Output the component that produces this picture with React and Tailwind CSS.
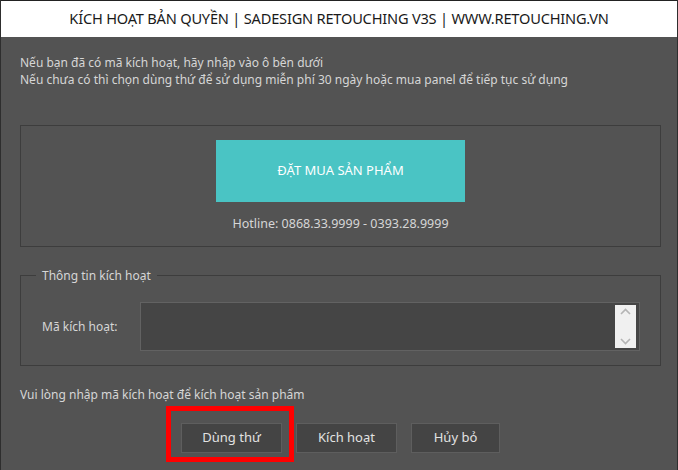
import React from "react";

const font = { fontFamily: '"Noto Sans", "Open Sans", sans-serif' };

const ActionButton = ({ label, width, highlighted }) => (
  <div className="relative">
    <button
      className={`${width} h-[30px] bg-[#444444] border border-[#5e5e5e] text-[13px] text-[#e2e2e2]`}
    >
      {label}
    </button>
    {highlighted && (
      <div className="absolute -left-[15px] -top-[17px] w-[128px] h-[56px] border-[5px] border-[#ff0000] pointer-events-none" />
    )}
  </div>
);

const App = () => {
  return (
    <div
      className="w-[678px] h-[470px] bg-[#535353] border-x border-[#2e2e2e] overflow-hidden"
      style={font}
    >
      {/* Title bar */}
      <div className="h-[37px] bg-white border-t border-[#222] flex items-center justify-center text-[14.6px] text-[#1a1a1a] tracking-[-0.2px]">
        KÍCH HOẠT BẢN QUYỀN | SADESIGN RETOUCHING V3S | WWW.RETOUCHING.VN
      </div>

      <div className="pl-[19px] pr-[16px] pt-[17px]">
        <div className="text-[12px] leading-[17px] text-[#d6d6d6]">
          <p>Nếu bạn đã có mã kích hoạt, hãy nhập vào ô bên dưới</p>
          <p>
            Nếu chưa có thì chọn dùng thứ để sử dụng miễn phí 30 ngày hoặc mua
            panel để tiếp tục sử dụng
          </p>
        </div>

        {/* Purchase box */}
        <div className="mt-[37px] h-[122px] border border-[#3d3d3d] flex flex-col items-center pt-[14px]">
          <button className="w-[249px] h-[62px] bg-[#4ac4c4] text-[13px] text-white">
            ĐẶT MUA SẢN PHẨM
          </button>
          <p className="mt-[13px] text-[12.5px] leading-[17px] text-[#d6d6d6]">
            Hotline: 0868.33.9999 - 0393.28.9999
          </p>
        </div>

        {/* Activation info */}
        <fieldset className="mt-[20px] h-[99px] border border-[#3d3d3d] pr-[20px] pl-[15px]">
          <legend className="px-[6px] text-[12px] leading-[17px] text-[#d6d6d6]">
            Thông tin kích hoạt
          </legend>
          <div className="flex items-center mt-[18px] pl-[6px]">
            <span className="w-[98px] text-[12px] text-[#d6d6d6]">
              Mã kích hoạt:
            </span>
            <div className="flex-1 h-[49px] bg-[#454545] border border-[#626262] flex justify-end pt-[2px] pr-[3px]">
              <div className="w-[21px] h-[43px] bg-[#f0f0f0] flex flex-col items-center justify-between py-[3px]">
                <svg width="11" height="7" viewBox="0 0 11 7">
                  <path d="M1 6 L5.5 1.5 L10 6" fill="none" stroke="#b4b4b4" strokeWidth="1.6" />
                </svg>
                <svg width="11" height="7" viewBox="0 0 11 7">
                  <path d="M1 1 L5.5 5.5 L10 1" fill="none" stroke="#b4b4b4" strokeWidth="1.6" />
                </svg>
              </div>
            </div>
          </div>
        </fieldset>

        <p className="mt-[20px] text-[12px] leading-[17px] text-[#d6d6d6]">
          Vui lòng nhập mã kích hoạt để kích hoạt sản phẩm
        </p>

        <div className="mt-[20px] flex justify-center gap-[14px]">
          <ActionButton label="Dùng thứ" width="w-[101px]" highlighted />
          <ActionButton label="Kích hoạt" width="w-[101px]" />
          <ActionButton label="Hủy bỏ" width="w-[89px]" />
        </div>
      </div>
    </div>
  );
};

export default App;
